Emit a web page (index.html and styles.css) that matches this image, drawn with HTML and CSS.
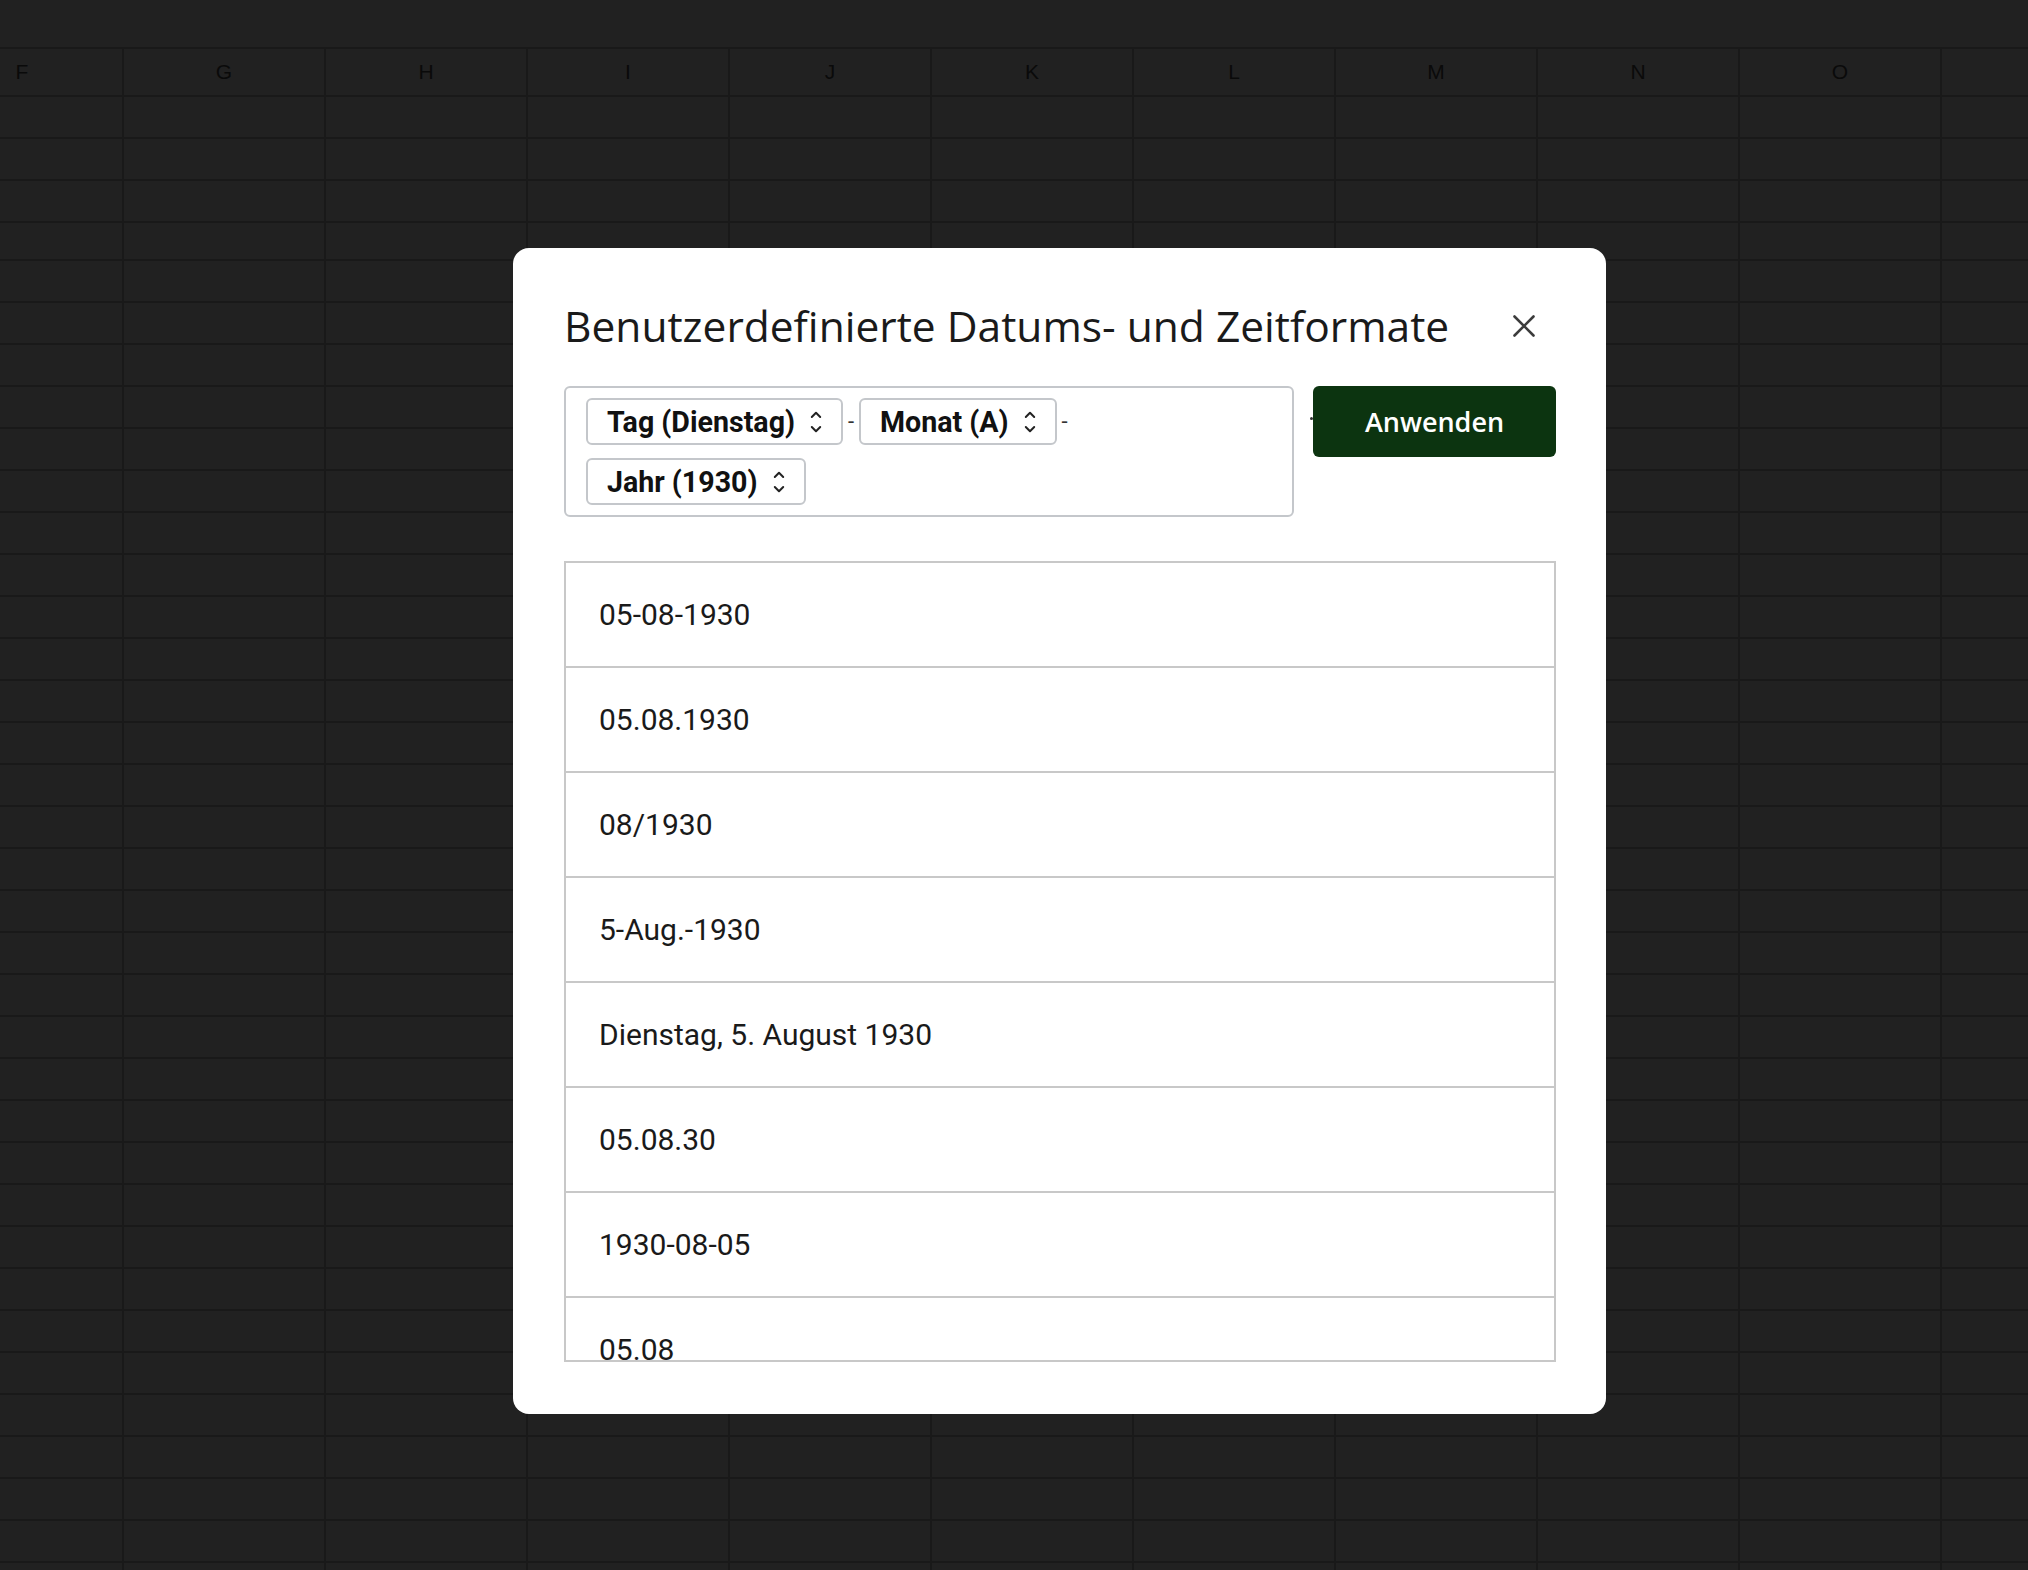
FILE: index.html
```html
<!DOCTYPE html>
<html lang="de">
  <head>
    <meta charset="UTF-8" />
    <meta name="viewport" content="width=device-width, initial-scale=1.0" />
    <title>Tabelle</title>
    <link rel="stylesheet" href="styles.css">
  </head>
  <body>
    <div class="sheet">
      <div class="topbar"></div>

      <div class="col-header">
        <div class="col">F</div>
        <div class="col">G</div>
        <div class="col">H</div>
        <div class="col">I</div>
        <div class="col">J</div>
        <div class="col">K</div>
        <div class="col">L</div>
        <div class="col">M</div>
        <div class="col">N</div>
        <div class="col">O</div>
        <div class="col"></div>
      </div>

      <div class="grid-body">
        <div class="row"></div>
        <div class="row"></div>
        <div class="row"></div>
        <div class="row short"></div>
        <div class="row"></div>
        <div class="row"></div>
        <div class="row"></div>
        <div class="row"></div>
        <div class="row"></div>
        <div class="row"></div>
        <div class="row"></div>
        <div class="row"></div>
        <div class="row"></div>
        <div class="row"></div>
        <div class="row"></div>
        <div class="row"></div>
        <div class="row"></div>
        <div class="row"></div>
        <div class="row"></div>
        <div class="row"></div>
        <div class="row"></div>
        <div class="row"></div>
        <div class="row"></div>
        <div class="row"></div>
        <div class="row"></div>
        <div class="row"></div>
        <div class="row"></div>
        <div class="row"></div>
        <div class="row"></div>
        <div class="row"></div>
        <div class="row"></div>
        <div class="row"></div>
        <div class="row"></div>
        <div class="row"></div>
        <div class="row"></div>
        <div class="row"></div>
      </div>
    </div>

    <div class="dialog">
      <div class="dialog-head">
        <h2 class="dialog-title">Benutzerdefinierte Datums- und Zeitformate</h2>
        <button class="close-btn" aria-label="Schließen">
          <svg width="24" height="24" viewBox="0 0 24 24">
            <path d="M2.5 2.5 L21.5 21.5 M21.5 2.5 L2.5 21.5" stroke="#3c3c3c" stroke-width="2.6" stroke-linecap="round" fill="none" />
          </svg>
        </button>
      </div>

      <div class="format-row">
        <div class="format-box">
          <div class="chip">
            Tag (Dienstag)
            <svg class="updown" width="12" height="24" viewBox="0 0 12 24">
              <path d="M1.8 7 L6 2.8 L10.2 7 M1.8 17 L6 21.2 L10.2 17" stroke="#222" stroke-width="2" stroke-linecap="round" stroke-linejoin="round" fill="none" />
            </svg>
          </div>
          <span class="sep">-</span>
          <div class="chip">
            Monat (A)
            <svg class="updown" width="12" height="24" viewBox="0 0 12 24">
              <path d="M1.8 7 L6 2.8 L10.2 7 M1.8 17 L6 21.2 L10.2 17" stroke="#222" stroke-width="2" stroke-linecap="round" stroke-linejoin="round" fill="none" />
            </svg>
          </div>
          <span class="sep">-</span>
          <div class="chip">
            Jahr (1930)
            <svg class="updown" width="12" height="24" viewBox="0 0 12 24">
              <path d="M1.8 7 L6 2.8 L10.2 7 M1.8 17 L6 21.2 L10.2 17" stroke="#222" stroke-width="2" stroke-linecap="round" stroke-linejoin="round" fill="none" />
            </svg>
          </div>
        </div>

        <button class="apply-btn">Anwenden</button>
      </div>

      <div class="format-list">
        <div class="format-item">05-08-1930</div>
        <div class="format-item">05.08.1930</div>
        <div class="format-item">08/1930</div>
        <div class="format-item">5-Aug.-1930</div>
        <div class="format-item">Dienstag, 5. August 1930</div>
        <div class="format-item">05.08.30</div>
        <div class="format-item">1930-08-05</div>
        <div class="format-item">05.08</div>
      </div>
    </div>
  </body>
</html>
```

FILE: styles.css
```css
* {
  margin: 0;
  padding: 0;
  box-sizing: border-box;
}

body {
  width: 2028px;
  height: 1570px;
  overflow: hidden;
  position: relative;
  background: #212121;
  font-family: Roboto, "Liberation Sans", Arial, sans-serif;
}

/* spreadsheet behind the dialog */

.topbar {
  height: 49px;
  border-bottom: 2px solid #191919;
}

.col-header {
  display: flex;
  height: 48px;
  border-bottom: 2px solid #191919;
}

.col {
  flex: none;
  width: 202px;
  border-right: 2px solid #191919;
  display: flex;
  align-items: center;
  justify-content: center;
  font-family: "Liberation Sans", Arial, sans-serif;
  font-size: 21px;
  color: #0a0a0a;
}

.col:first-child {
  margin-left: -78px;
}

.grid-body {
  background-image: linear-gradient(to right, #191919 2px, transparent 2px);
  background-size: 202px 100%;
  background-position: 122px 0;
}

.row {
  height: 42px;
  border-bottom: 2px solid #191919;
}

.row.short {
  height: 38px;
}

/* dialog */

.dialog {
  position: absolute;
  left: 513px;
  top: 248px;
  width: 1093px;
  background: #fff;
  border-radius: 16px;
  padding: 54px 50px 52px 51px;
}

.dialog-head {
  display: flex;
  align-items: center;
  justify-content: space-between;
  height: 48px;
}

.dialog-title {
  font-family: "Open Sans", Roboto, sans-serif;
  font-size: 42.5px;
  font-weight: 400;
  line-height: 48px;
  color: #1a1a1a;
}

.close-btn {
  width: 24px;
  height: 24px;
  margin-right: 20px;
  background: none;
  border: none;
  cursor: pointer;
}

.format-row {
  display: flex;
  align-items: flex-start;
  gap: 19px;
  margin-top: 36px;
}

.format-box {
  width: 730px;
  min-height: 131px;
  padding: 10px 20px;
  border: 2px solid #c4c7cb;
  border-radius: 6px;
  display: flex;
  flex-wrap: wrap;
  align-items: center;
  align-content: flex-start;
  row-gap: 13px;
}

.chip {
  display: flex;
  align-items: center;
  gap: 15px;
  height: 47px;
  padding: 0 19px;
  border: 2px solid #c4c7cb;
  border-radius: 6px;
  font-size: 28.6px;
  font-weight: 700;
  color: #111;
}

.sep {
  width: 16px;
  text-align: center;
  font-size: 22px;
  color: #333;
}

.apply-btn {
  position: relative;
  width: 243px;
  height: 71px;
  background: #0c3410;
  color: #fff;
  border: none;
  border-radius: 6px;
  font-family: "Open Sans", Roboto, sans-serif;
  font-size: 27px;
  font-weight: 600;
  cursor: pointer;
}

.apply-btn::before {
  content: "";
  position: absolute;
  left: -3px;
  top: 31px;
  width: 3px;
  height: 3px;
  border-radius: 50%;
  background: #333;
}

.format-list {
  margin-top: 44px;
  height: 801px;
  border: 2px solid #c8c8c8;
  overflow: hidden;
}

.format-item {
  height: 105px;
  display: flex;
  align-items: center;
  padding-left: 33px;
  border-bottom: 2px solid #c8c8c8;
  font-size: 30px;
  color: #1a1a1a;
}
```
